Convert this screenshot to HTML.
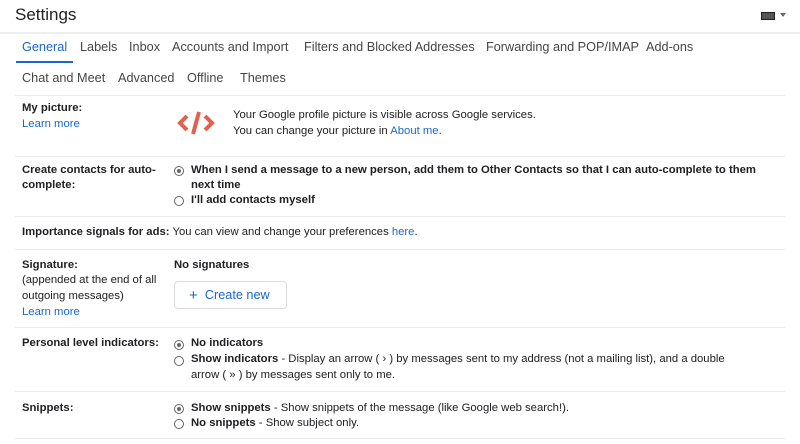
<!DOCTYPE html>
<html><head><style>
body{margin:0;width:800px;height:444px;background:#fff;font-family:"Liberation Sans",sans-serif;color:#202124;position:relative;overflow:hidden}
.a{position:absolute;white-space:nowrap;font-size:11.3px;line-height:15px}
.b{font-weight:bold}
.l{color:#1967d2}
.hr{position:absolute;left:15px;right:15px;height:1px;background:#e8eaed}
.tab{position:absolute;font-size:12.7px;color:#444746;white-space:nowrap}
.r{position:absolute;width:8px;height:8px;border:1px solid #666;border-radius:50%;background:#fff}
.r.on::after{content:"";position:absolute;left:2px;top:2px;width:4px;height:4px;border-radius:50%;background:#666}
</style></head><body>
<div class="a" style="left:15px;top:5px;font-size:17px;line-height:20px;color:#202124">Settings</div>
<div style="position:absolute;left:761px;top:12px;width:12px;height:6px;background:#555;border:1px solid #222"></div>
<div style="position:absolute;left:780px;top:13px;border-left:3px solid transparent;border-right:3px solid transparent;border-top:4px solid #666"></div>
<div style="position:absolute;left:0;right:0;top:32px;height:2px;background:#eee"></div>
<div class="tab" style="left:22px;top:40px;color:#1967d2">General</div>
<div style="position:absolute;left:16px;top:61px;width:57px;height:2px;background:#1967d2"></div>
<div class="tab" style="left:80px;top:40px">Labels</div>
<div class="tab" style="left:129px;top:40px">Inbox</div>
<div class="tab" style="left:172px;top:40px">Accounts and Import</div>
<div class="tab" style="left:304px;top:40px">Filters and Blocked Addresses</div>
<div class="tab" style="left:486px;top:40px">Forwarding and POP/IMAP</div>
<div class="tab" style="left:646px;top:40px">Add-ons</div>
<div class="tab" style="left:22px;top:71px">Chat and Meet</div>
<div class="tab" style="left:118px;top:71px">Advanced</div>
<div class="tab" style="left:187px;top:71px">Offline</div>
<div class="tab" style="left:240px;top:71px">Themes</div>
<div class="hr" style="top:95px"></div>

<div class="a b" style="left:22px;top:101px">My picture:</div>
<div class="a l" style="left:22px;top:117px">Learn more</div>
<svg style="position:absolute;left:176px;top:108px" width="40" height="30" viewBox="0 0 40 30"><g fill="none" stroke="#e06150" stroke-width="4"><path d="M11 8 L4 15 L11 22"/><path d="M29 8 L36 15 L29 22"/><path d="M23 4 L17 26"/></g></svg>
<div class="a" style="left:233px;top:108px">Your Google profile picture is visible across Google services.</div>
<div class="a" style="left:233px;top:124px">You can change your picture in <span class="l">About me</span>.</div>
<div class="hr" style="top:156px"></div>

<div class="a b" style="left:22px;top:163px">Create contacts for auto-</div>
<div class="a b" style="left:22px;top:178px">complete:</div>
<div class="r on" style="left:174px;top:166px"></div>
<div class="a b" style="left:191px;top:163px">When I send a message to a new person, add them to Other Contacts so that I can auto-complete to them</div>
<div class="a b" style="left:191px;top:178px">next time</div>
<div class="r" style="left:174px;top:196px"></div>
<div class="a b" style="left:191px;top:193px">I'll add contacts myself</div>
<div class="hr" style="top:216px"></div>

<div class="a" style="left:22px;top:225px"><b>Importance signals for ads:</b> You can view and change your preferences <span class="l">here</span>.</div>
<div class="hr" style="top:249px"></div>

<div class="a b" style="left:22px;top:258px">Signature:</div>
<div class="a" style="left:22px;top:273px">(appended at the end of all</div>
<div class="a" style="left:22px;top:289px">outgoing messages)</div>
<div class="a l" style="left:22px;top:305px">Learn more</div>
<div class="a b" style="left:174px;top:258px">No signatures</div>
<div style="position:absolute;left:174px;top:281px;width:111px;height:26px;border:1px solid #dadce0;border-radius:4px"></div>
<div class="a l" style="left:189px;top:287px;font-size:12.7px"><span style="font-size:15px;position:relative;top:1px">+</span>&nbsp; Create new</div>
<div class="hr" style="top:327px"></div>

<div class="a b" style="left:22px;top:336px">Personal level indicators:</div>
<div class="r on" style="left:174px;top:340px"></div>
<div class="a b" style="left:191px;top:336px">No indicators</div>
<div class="r" style="left:174px;top:356px"></div>
<div class="a" style="left:191px;top:352px"><b>Show indicators</b> - Display an arrow ( › ) by messages sent to my address (not a mailing list), and a double</div>
<div class="a" style="left:191px;top:368px">arrow ( » ) by messages sent only to me.</div>
<div class="hr" style="top:391px"></div>

<div class="a b" style="left:22px;top:401px">Snippets:</div>
<div class="r on" style="left:174px;top:404px"></div>
<div class="a" style="left:191px;top:401px"><b>Show snippets</b> - Show snippets of the message (like Google web search!).</div>
<div class="r" style="left:174px;top:419px"></div>
<div class="a" style="left:191px;top:416px"><b>No snippets</b> - Show subject only.</div>
<div class="hr" style="top:438px"></div>
</body></html>
